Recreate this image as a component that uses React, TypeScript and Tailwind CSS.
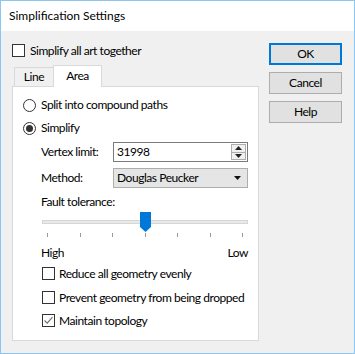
import React from "react";

function Box({ checked = false }: { checked?: boolean }) {
  return (
    <span className="w-[13px] h-[13px] border border-[#333333] bg-white shrink-0 flex items-center justify-center">
      {checked && (
        <svg width="11" height="11" viewBox="0 0 11 11">
          <path d="M1.5 5.5 L4.2 8.2 L9.5 2.2" stroke="#6d6d6d" fill="none" strokeWidth="1.1" />
        </svg>
      )}
    </span>
  );
}

function Radio({ checked = false }: { checked?: boolean }) {
  return (
    <span className="w-[13px] h-[13px] rounded-full border border-[#333333] bg-white shrink-0 flex items-center justify-center">
      {checked && <span className="w-[7px] h-[7px] rounded-full bg-[#333333]" />}
    </span>
  );
}

export default function App() {
  const ticks = [0, 1, 2, 3, 4, 5, 6];
  return (
    <div className="w-[355px] h-[354px] border border-[#8cc6f2] flex flex-col font-['Lato',sans-serif] text-[12px] text-black leading-none whitespace-nowrap">
      <div className="h-[30px] bg-white flex items-center pl-[8px] shrink-0">Simplification Settings</div>
      <div className="flex-1 bg-[#f0f0f0] flex pl-[11px] pt-[12px] tracking-[-0.45px]">
        <div className="w-[247px] flex flex-col">
          <div className="mt-[1px] h-[13px] flex items-center">
            <Box />
            <span className="ml-[5px]">Simplify all art together</span>
          </div>
          <div className="mt-[8px] h-[21px] flex items-end">
            <div className="ml-[2px] w-[39px] h-[19px] border-l border-t border-[#d9d9d9] bg-[#f0f0f0] flex items-center justify-center">
              Line
            </div>
            <div className="w-[49px] h-[22px] mb-[-1px] relative z-10 border-l border-t border-r border-[#d9d9d9] bg-white flex items-center justify-center pb-[2px]">
              Area
            </div>
          </div>
          <div className="w-[247px] h-[255px] border border-[#d9d9d9] bg-white flex flex-col pl-[10px]">
            <div className="mt-[8px] h-[20px] flex items-center">
              <Radio />
              <span className="ml-[5px]">Split into compound paths</span>
            </div>
            <div className="mt-[3px] h-[20px] flex items-center">
              <Radio checked />
              <span className="ml-[5px]">Simplify</span>
            </div>
            <div className="mt-[4px] h-[20px] flex items-center pl-[18px]">
              <span className="w-[72px]">Vertex limit:</span>
              <div className="w-[135px] h-[20px] border border-[#7a7a7a] bg-white flex items-center justify-between pl-[3px] pr-[1px]">
                <span>31998</span>
                <div className="w-[15px] h-[16px] border border-[#adadad] bg-[#f0f0f0] flex flex-col">
                  <div className="flex-1 flex items-center justify-center border-b border-[#adadad]">
                    <svg width="7" height="4" viewBox="0 0 7 4"><path d="M0 4 L3.5 0 L7 4 Z" fill="#222" /></svg>
                  </div>
                  <div className="flex-1 flex items-center justify-center">
                    <svg width="7" height="4" viewBox="0 0 7 4"><path d="M0 0 L3.5 4 L7 0 Z" fill="#222" /></svg>
                  </div>
                </div>
              </div>
            </div>
            <div className="mt-[6px] h-[20px] flex items-center pl-[18px]">
              <span className="w-[72px]">Method:</span>
              <div className="w-[135px] h-[20px] border border-[#adadad] bg-[#e5e5e5] flex items-center justify-between pl-[3px] pr-[6px]">
                <span>Douglas Peucker</span>
                <svg width="7" height="4" viewBox="0 0 7 4"><path d="M0 0 L3.5 4 L7 0 Z" fill="#111" /></svg>
              </div>
            </div>
            <div className="mt-[5px] h-[18px] flex items-center pl-[18px]">Fault tolerance:</div>
            <div className="mt-[1px] ml-[19px] w-[206px] h-[26px] relative">
              <div className="absolute left-0 right-0 top-[8px] h-[4px] bg-[#e7eaea] border border-[#d6d6d6]" />
              <svg className="absolute left-[98px] top-0" width="11" height="20" viewBox="0 0 11 20">
                <path d="M0 0 H11 V15 L5.5 20 L0 15 Z" fill="#0078d7" />
              </svg>
              <div className="absolute left-0 right-0 top-[21px] h-[4px] px-[5px] flex justify-between">
                {ticks.map((t) => (
                  <span key={t} className="w-[1px] h-[4px] bg-[#9a9a9a]" />
                ))}
              </div>
            </div>
            <div className="mt-[6px] h-[18px] ml-[18px] w-[207px] flex items-center justify-between">
              <span>High</span>
              <span>Low</span>
            </div>
            <div className="mt-[5px] h-[13px] ml-[19px] flex items-center">
              <Box />
              <span className="ml-[4px]">Reduce all geometry evenly</span>
            </div>
            <div className="mt-[11px] h-[13px] ml-[19px] flex items-center">
              <Box />
              <span className="ml-[4px]">Prevent geometry from being dropped</span>
            </div>
            <div className="mt-[10px] h-[13px] ml-[19px] flex items-center">
              <Box checked />
              <span className="ml-[4px]">Maintain topology</span>
            </div>
          </div>
        </div>
        <div className="ml-[10px] w-[73px] flex flex-col gap-[7px]">
          <div className="h-[22px] border-2 border-[#0078d7] bg-[#e1e1e1] flex items-center justify-center">OK</div>
          <div className="h-[22px] border border-[#adadad] bg-[#e1e1e1] flex items-center justify-center">Cancel</div>
          <div className="h-[22px] border border-[#adadad] bg-[#e1e1e1] flex items-center justify-center">Help</div>
        </div>
      </div>
    </div>
  );
}
